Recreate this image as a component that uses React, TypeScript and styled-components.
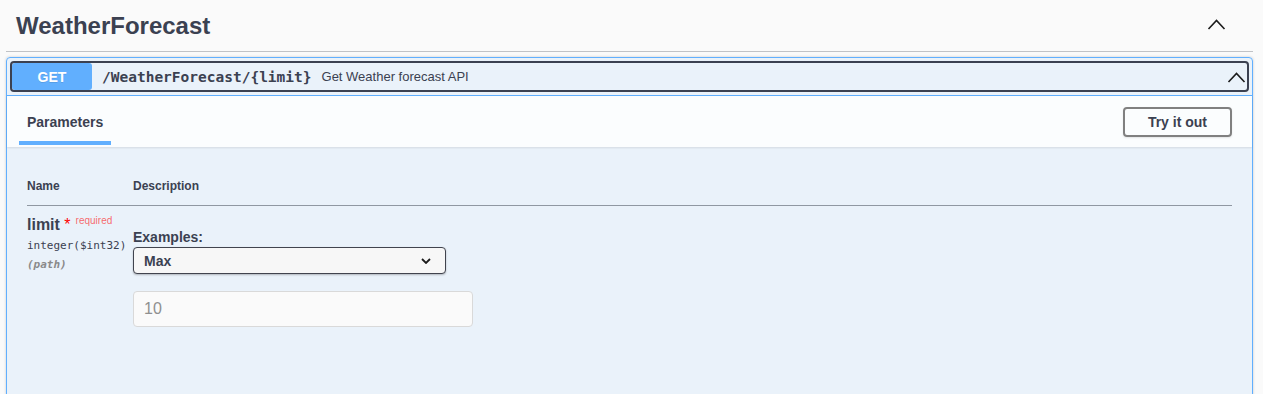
import React from "react";
import styled, { createGlobalStyle } from "styled-components";

const GlobalStyle = createGlobalStyle`
  html, body {
    margin: 0;
    padding: 0;
    background: #fafafa;
  }

  body {
    font-family: "Liberation Sans", Arial, sans-serif;
    color: #3b4151;
  }
`;

const Page = styled.div`
  padding: 0 10px 0 6px;
`;

const TagHeader = styled.h3`
  display: flex;
  align-items: center;
  justify-content: space-between;
  box-sizing: border-box;
  height: 52px;
  margin: 0 0 5px;
  padding: 1px 26px 0 10px;
  border-bottom: 1px solid rgba(59, 65, 81, 0.3);
  font-size: 24px;
  font-weight: 700;
  color: #3b4151;
`;

const Opblock = styled.div`
  border: 1px solid #61affe;
  border-radius: 4px;
  background: rgba(97, 175, 254, 0.1);
  box-shadow: 0 0 3px rgba(0, 0, 0, 0.19);
`;

const Summary = styled.div`
  border-bottom: 1px solid #61affe;
`;

const Control = styled.div`
  display: flex;
  align-items: center;
  padding: 5px;
  border-radius: 7px;
  outline: 2px solid #3b4151;
  outline-offset: -5px;
`;

const Method = styled.span`
  display: flex;
  align-items: center;
  justify-content: center;
  min-width: 80px;
  height: 27px;
  border-radius: 3px;
  background: #61affe;
  color: #fff;
  font-size: 14px;
  font-weight: 700;
  text-shadow: 0 1px 0 rgba(0, 0, 0, 0.1);
`;

const Path = styled.span`
  padding: 0 10px;
  font-family: "DejaVu Sans Mono", monospace;
  font-size: 14.5px;
  font-weight: 700;
  color: #3b4151;
`;

const Desc = styled.span`
  flex: 1;
  font-size: 13px;
  color: #3b4151;
`;

const SectionHeader = styled.div`
  display: flex;
  align-items: flex-end;
  justify-content: space-between;
  box-sizing: border-box;
  height: 51px;
  padding: 0 20px 2px 12px;
  background: rgba(255, 255, 255, 0.8);
  box-shadow: 0 1px 2px rgba(0, 0, 0, 0.1);
`;

const Tab = styled.h4`
  margin: 0;
  padding: 0 8px 11px;
  border-bottom: 4px solid #61affe;
  font-size: 14px;
  line-height: 16px;
  font-weight: 700;
  color: #3b4151;
`;

const TryButton = styled.button`
  align-self: center;
  margin-top: 3px;
  padding: 5px 23px;
  border: 2px solid #808080;
  border-radius: 4px;
  background: transparent;
  box-shadow: 0 1px 2px rgba(0, 0, 0, 0.1);
  font-family: "Liberation Sans", Arial, sans-serif;
  font-size: 14px;
  line-height: 16px;
  font-weight: 700;
  color: #3b4151;
`;

const TableWrap = styled.div`
  padding: 20px 20px 90px;
`;

const Table = styled.table`
  width: 100%;
  border-collapse: collapse;
`;

const Th = styled.th<{ $w?: number }>`
  width: ${(p) => (p.$w ? `${p.$w}px` : "auto")};
  padding: 12px 0;
  border-bottom: 1px solid rgba(59, 65, 81, 0.3);
  text-align: left;
  font-size: 12px;
  line-height: 14px;
  font-weight: 700;
  color: #3b4151;
`;

const Td = styled.td`
  padding: 10px 0 0;
  vertical-align: top;
`;

const ParamName = styled.div`
  font-size: 16px;
  line-height: 18px;
  font-weight: 700;
  color: #3b4151;
  white-space: nowrap;
`;

const Star = styled.span`
  color: red;
  font-weight: 400;
`;

const Required = styled.span`
  padding-left: 5px;
  font-size: 10px;
  line-height: 1;
  font-weight: 400;
  vertical-align: 6px;
  color: rgba(255, 0, 0, 0.6);
`;

const Mono = styled.div<{ $muted?: boolean }>`
  padding: ${(p) => (p.$muted ? "0" : "5px 0")};
  font-family: "DejaVu Sans Mono", monospace;
  font-size: 11px;
  line-height: 14px;
  font-style: ${(p) => (p.$muted ? "italic" : "normal")};
  font-weight: ${(p) => (p.$muted ? 600 : 400)};
  color: ${(p) => (p.$muted ? "#8a8a8a" : "#3b4151")};
  white-space: nowrap;
`;

const Label = styled.div`
  margin-top: 13px;
  font-size: 14px;
  line-height: 16px;
  font-weight: 700;
  color: #3b4151;
`;

const Select = styled.div`
  display: flex;
  align-items: center;
  justify-content: space-between;
  box-sizing: border-box;
  width: 313px;
  height: 27px;
  margin-top: 2px;
  padding: 0 14px 0 10px;
  border: 1px solid #41444e;
  border-radius: 4px;
  background: #f7f7f7;
  box-shadow: 0 1px 2px rgba(0, 0, 0, 0.25);
  font-size: 14px;
  font-weight: 700;
  color: #3b4151;
`;

const ValueInput = styled.input`
  display: block;
  box-sizing: border-box;
  width: 340px;
  height: 36px;
  margin-top: 17px;
  padding: 0 10px;
  border: 1px solid #d9d9d9;
  border-radius: 4px;
  background: #fafafa;
  font-family: "Liberation Sans", Arial, sans-serif;
  font-size: 16px;
  color: #8f8f8f;
  outline: none;
`;

function ChevronUp({ y = 0 }: { y?: number }) {
  return (
    <svg width="20" height="20" viewBox="0 0 20 20" aria-hidden="true">
      <path
        d={`M1.5 ${14 + y} L9.5 ${5.5 + y} L17.5 ${14 + y}`}
        fill="none"
        stroke="#1b1b1b"
        strokeWidth="1.6"
      />
    </svg>
  );
}

function App() {
  return (
    <>
      <GlobalStyle />
      <Page>
        <TagHeader>
          <span>WeatherForecast</span>
          <ChevronUp y={-1} />
        </TagHeader>

        <Opblock>
          <Summary>
            <Control>
              <Method>GET</Method>
              <Path>/WeatherForecast/{"{limit}"}</Path>
              <Desc>Get Weather forecast API</Desc>
              <ChevronUp y={1} />
            </Control>
          </Summary>

          <SectionHeader>
            <Tab>Parameters</Tab>
            <TryButton>Try it out</TryButton>
          </SectionHeader>

          <TableWrap>
            <Table>
              <thead>
                <tr>
                  <Th $w={106}>Name</Th>
                  <Th>Description</Th>
                </tr>
              </thead>
              <tbody>
                <tr>
                  <Td>
                    <ParamName>
                      limit
                      <Star>&nbsp;*</Star>
                      <Required>required</Required>
                    </ParamName>
                    <Mono>integer($int32)</Mono>
                    <Mono $muted>(path)</Mono>
                  </Td>
                  <Td>
                    <Label>Examples:</Label>
                    <Select>
                      <span>Max</span>
                      <svg width="10" height="6" viewBox="0 0 10 6" aria-hidden="true">
                        <path d="M1 1 L5 5 L9 1" fill="none" stroke="#1b1b1b" strokeWidth="1.8" />
                      </svg>
                    </Select>
                    <ValueInput readOnly value="10" />
                  </Td>
                </tr>
              </tbody>
            </Table>
          </TableWrap>
        </Opblock>
      </Page>
    </>
  );
}

export default App;
